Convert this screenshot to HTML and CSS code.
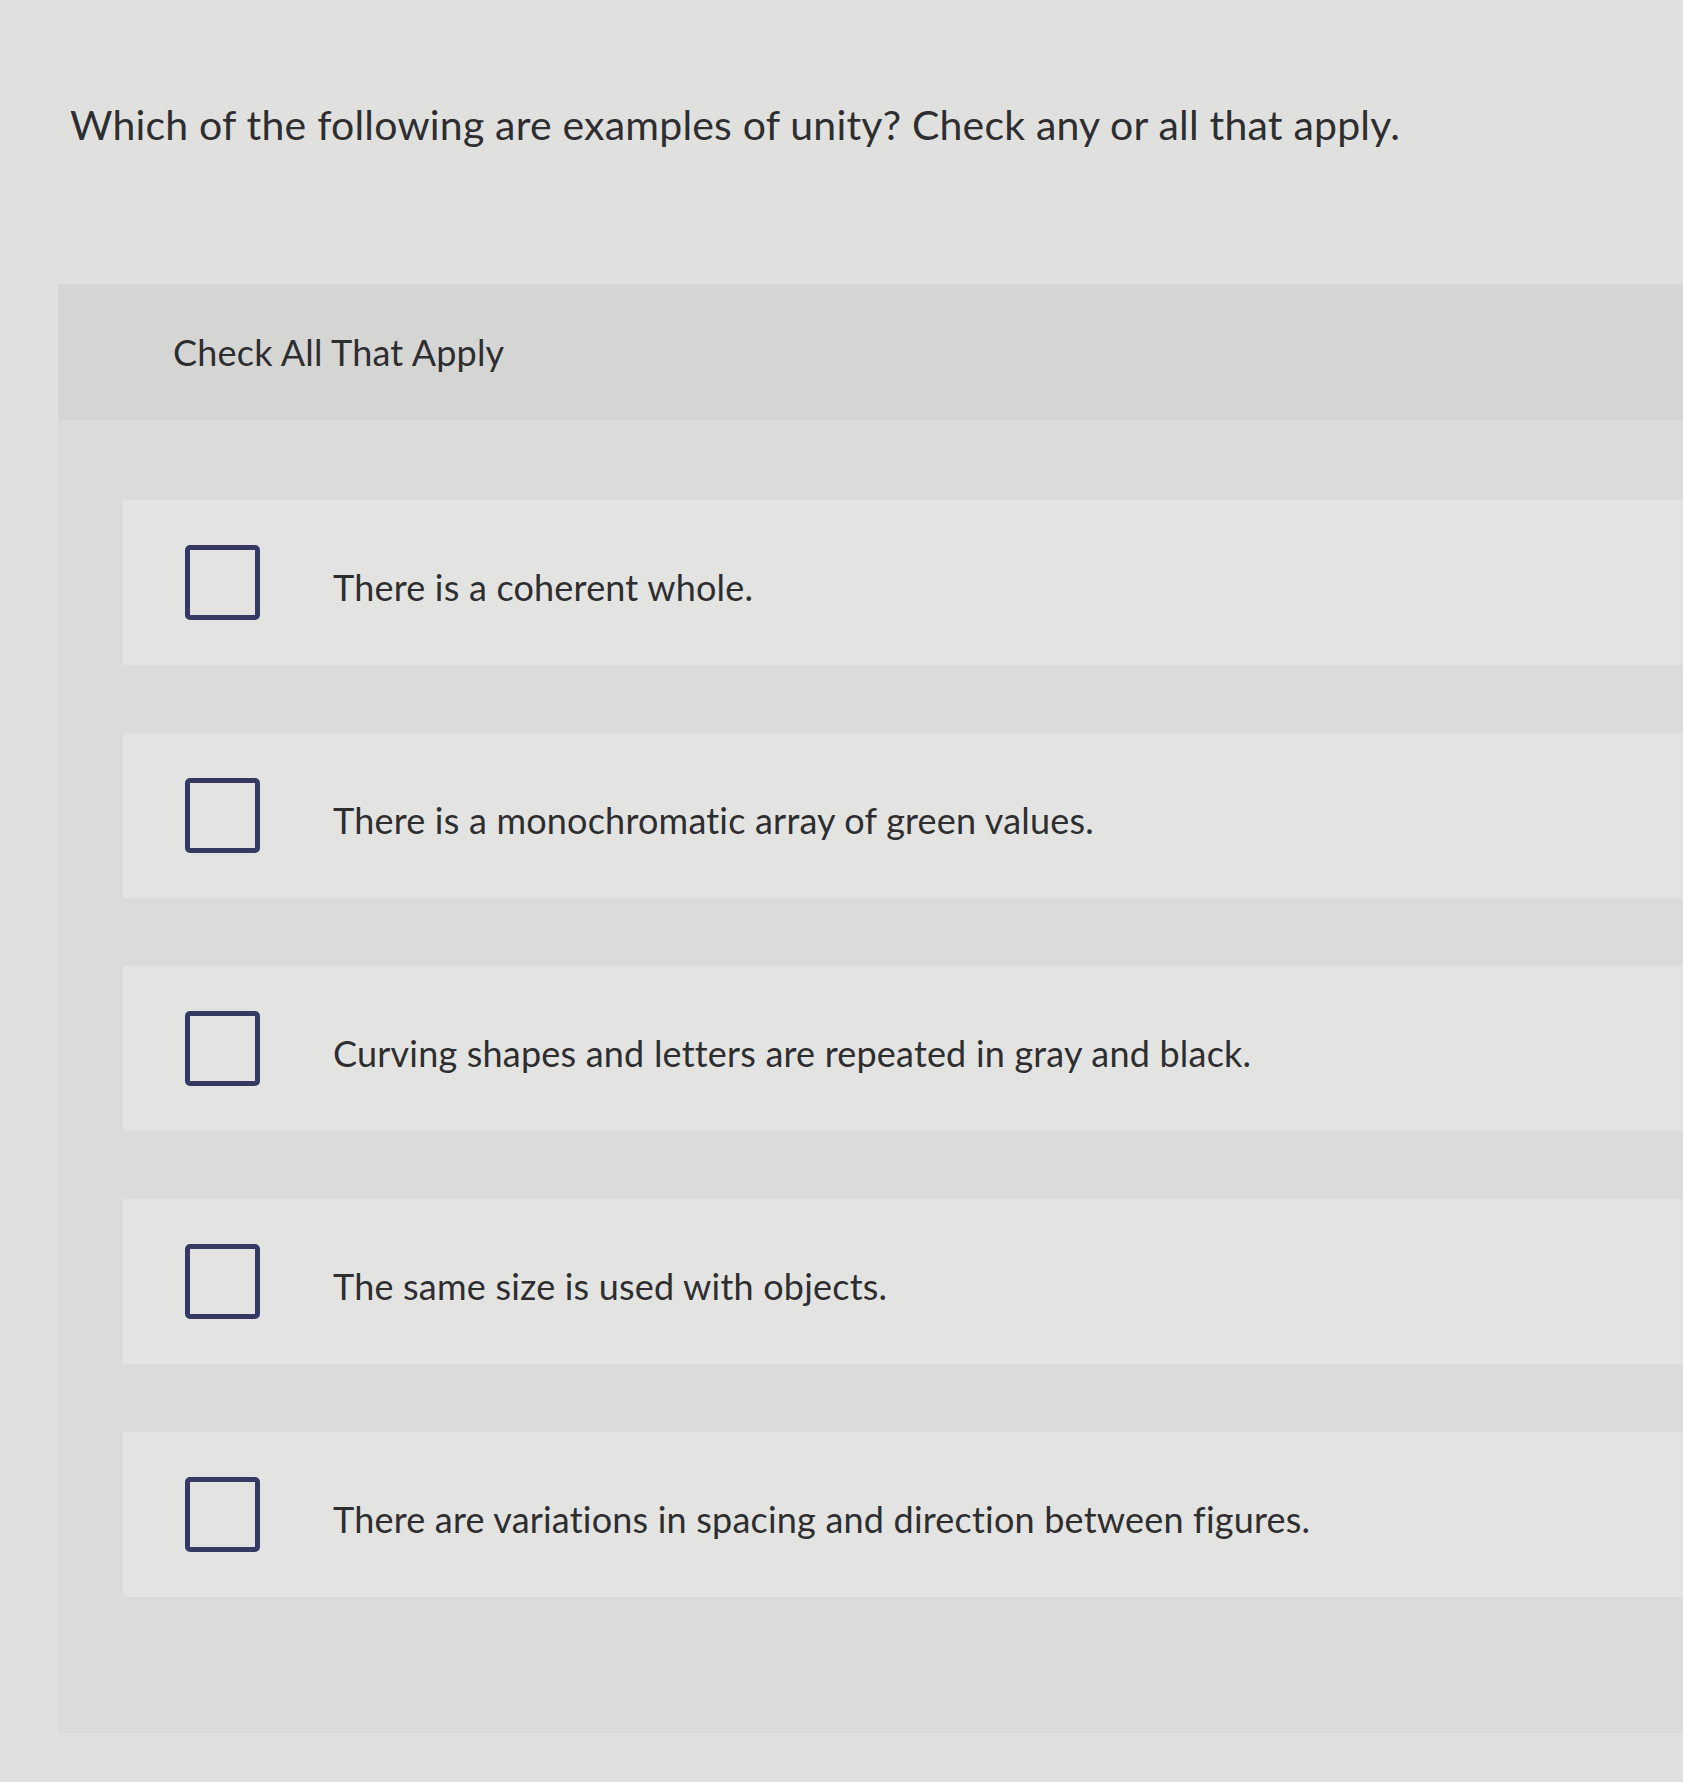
FILE: index.html
```html
<!DOCTYPE html>
<html lang="en">
<head>
<meta charset="utf-8">
<title>Check All That Apply</title>
<link rel="stylesheet" href="styles.css">
</head>
<body>
<main class="page">
  <h1 class="question">Which of the following are examples of unity? Check any or all that apply.</h1>
  <section class="panel">
    <div class="panel-head">Check All That Apply</div>
    <ul class="options">
      <li class="option"><span class="box"></span><span class="label">There is a coherent whole.</span></li>
      <li class="option"><span class="box"></span><span class="label">There is a monochromatic array of green values.</span></li>
      <li class="option"><span class="box"></span><span class="label">Curving shapes and letters are repeated in gray and black.</span></li>
      <li class="option"><span class="box"></span><span class="label">The same size is used with objects.</span></li>
      <li class="option"><span class="box"></span><span class="label">There are variations in spacing and direction between figures.</span></li>
    </ul>
  </section>
</main>
</body>
</html>
```

FILE: styles.css
```css
html, body {
  margin: 0;
  padding: 0;
}
body {
  background: #e0e1df;
  font-family: "Lato", "Open Sans", "Liberation Sans", sans-serif;
  color: #2e2e30;
  width: 1683px;
  height: 1782px;
  overflow: hidden;
}
.page {
  padding-top: 101px;
}
.question {
  margin: 0 0 0 70px;
  font-size: 41px;
  line-height: 48px;
  font-weight: 400;
  letter-spacing: 0.2px;
}
.panel {
  margin-top: 135px;
  margin-left: 58px;
  background: #dbdcda;
  padding-bottom: 136px;
}
.panel-head {
  height: 136px;
  background: #d5d6d4;
  display: flex;
  align-items: center;
  padding-left: 115px;
  font-size: 36px;
  letter-spacing: 0.2px;
}
.options {
  list-style: none;
  margin: 0;
  padding: 80px 0 0 65px;
  display: flex;
  flex-direction: column;
  gap: 68px;
}
.option {
  height: 165px;
  background: #e3e4e2;
  display: flex;
  align-items: center;
  padding-left: 62px;
}
.box {
  width: 65px;
  height: 65px;
  border: 5px solid #363a62;
  border-radius: 5px;
  flex: none;
}
.label {
  margin-left: 73px;
  padding-top: 8px;
  font-size: 36px;
  letter-spacing: 0.2px;
}
```
